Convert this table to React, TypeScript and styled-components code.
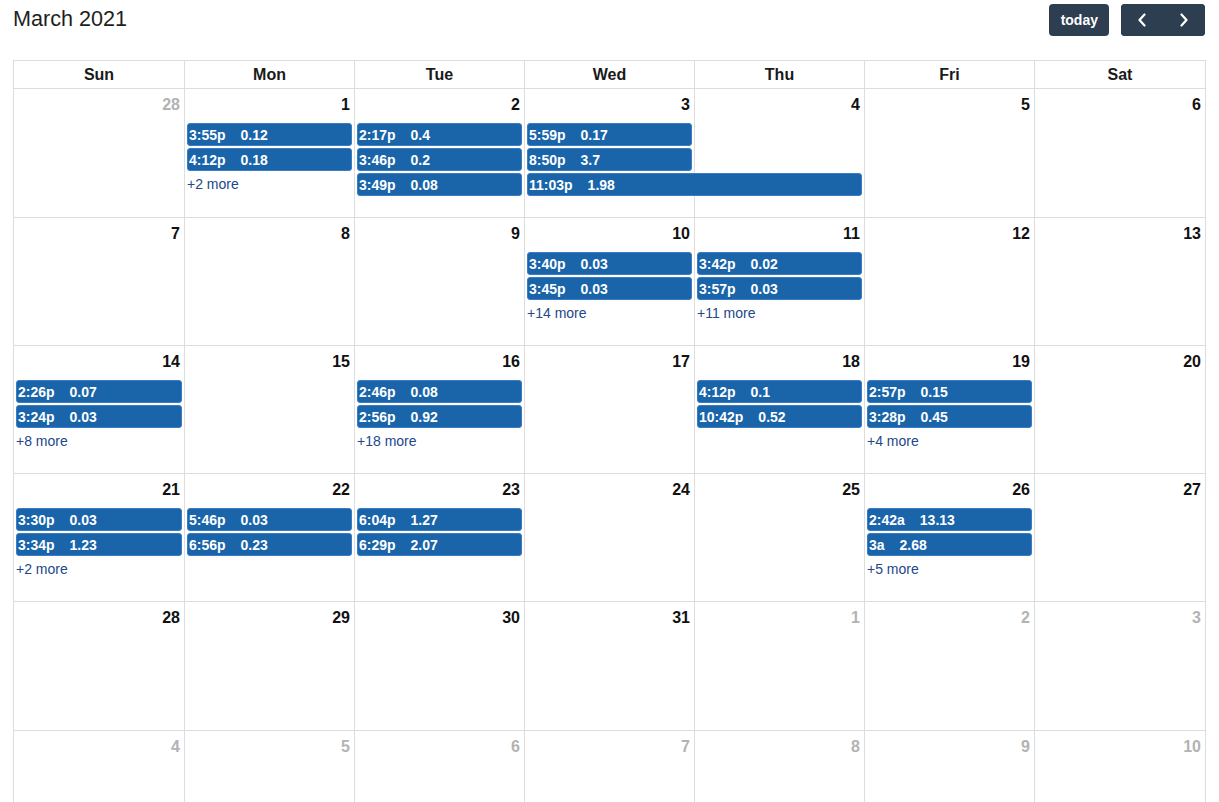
import React from "react";
import styled, { createGlobalStyle } from "styled-components";

const GlobalStyle = createGlobalStyle`
  html, body { margin: 0; padding: 0; overflow: hidden; background: #fff; }
  body { font-family: "Liberation Sans", Arial, sans-serif; color: #212121; }
  * { box-sizing: border-box; }
`;

const COLS = "171px 170px 170px 170px 170px 170px 171px";

const Page = styled.div`
  padding: 0 13px 0 13px;
`;

const Toolbar = styled.div`
  height: 40px;
  display: flex;
  align-items: center;
  justify-content: space-between;
  margin: 0 1px 20px 0;
`;

const Title = styled.h2`
  margin: 0;
  font-size: 21.6px;
  font-weight: normal;
  color: #1e1e1e;
  line-height: 1;
  position: relative;
  top: -1px;
`;

const Controls = styled.div`
  display: flex;
  align-items: center;
  gap: 12px;
`;

const Button = styled.button`
  height: 32px;
  border: none;
  background: #2c3e50;
  color: #fff;
  font-family: "Liberation Sans", Arial, sans-serif;
  font-weight: bold;
  font-size: 14px;
  border-radius: 4px;
  padding: 0 11px 0 12px;
  display: flex;
  align-items: center;
  justify-content: center;
`;

const Group = styled.div`
  display: flex;
  border-radius: 4px;
  overflow: hidden;
  background: #2c3e50;
`;

const IconButton = styled(Button)`
  width: 42px;
  padding: 0;
  border-radius: 0;
`;

const Table = styled.div`
  width: 1193px;
  border-right: 1px solid #ddd;
  border-top: 1px solid #ddd;
`;

const HeaderRow = styled.div`
  display: grid;
  grid-template-columns: ${COLS};
`;

const HeaderCell = styled.div`
  height: 28px;
  border-left: 1px solid #ddd;
  border-bottom: 1px solid #ddd;
  display: flex;
  align-items: center;
  justify-content: center;
  font-size: 16px;
  font-weight: bold;
  color: #1a1a1a;
  padding-top: 1px;
`;

const Week = styled.div<{ $h: number }>`
  display: grid;
  grid-template-columns: ${COLS};
  grid-template-rows: 34px 25px 25px 25px 1fr;
  height: ${(p) => p.$h}px;
`;

const DayCell = styled.div<{ $col: number }>`
  grid-column: ${(p) => p.$col};
  grid-row: 1 / -1;
  border-left: 1px solid #ddd;
  border-bottom: 1px solid #ddd;
  display: flex;
  justify-content: flex-end;
  align-items: flex-start;
`;

const DayNumber = styled.span<{ $other: boolean }>`
  padding: 7px 4px 0 0;
  font-size: 16px;
  font-weight: bold;
  line-height: 18px;
  color: ${(p) => (p.$other ? "#b3b3b3" : "#111")};
`;

const Event = styled.div<{ $col: number; $slot: number; $span: number }>`
  grid-column: ${(p) => p.$col} / span ${(p) => p.$span};
  grid-row: ${(p) => p.$slot + 1};
  align-self: start;
  height: 23px;
  margin: 0 2px 0 3px;
  background: #1a64a9;
  border: 1px solid #3a7cc6;
  border-radius: 3px;
  color: #fff;
  font-size: 14px;
  font-weight: bold;
  display: flex;
  align-items: center;
  padding: 0 1px;
  white-space: nowrap;
  overflow: hidden;
  min-width: 0;
`;

const EventTime = styled.span`
  margin-right: 15px;
`;

const MoreLink = styled.a<{ $col: number; $slot: number }>`
  grid-column: ${(p) => p.$col};
  grid-row: ${(p) => p.$slot + 1};
  align-self: start;
  margin-left: 3px;
  height: 23px;
  line-height: 22px;
  font-size: 14px;
  color: #22478a;
  text-decoration: none;
  white-space: nowrap;
`;

type Ev = { time: string; title: string; col: number; slot: number; span?: number };
type More = { col: number; slot: number; count: number };
type WeekData = {
  h: number;
  days: { n: number; other?: boolean }[];
  events: Ev[];
  more: More[];
};

const range = (start: number, end: number, other = false) =>
  Array.from({ length: end - start + 1 }, (_, i) => ({ n: start + i, other }));

const weeks: WeekData[] = [
  {
    h: 129,
    days: [{ n: 28, other: true }, ...range(1, 6)],
    events: [
      { time: "3:55p", title: "0.12", col: 2, slot: 1 },
      { time: "4:12p", title: "0.18", col: 2, slot: 2 },
      { time: "2:17p", title: "0.4", col: 3, slot: 1 },
      { time: "3:46p", title: "0.2", col: 3, slot: 2 },
      { time: "3:49p", title: "0.08", col: 3, slot: 3 },
      { time: "5:59p", title: "0.17", col: 4, slot: 1 },
      { time: "8:50p", title: "3.7", col: 4, slot: 2 },
      { time: "11:03p", title: "1.98", col: 4, slot: 3, span: 2 },
    ],
    more: [{ col: 2, slot: 3, count: 2 }],
  },
  {
    h: 128,
    days: range(7, 13),
    events: [
      { time: "3:40p", title: "0.03", col: 4, slot: 1 },
      { time: "3:45p", title: "0.03", col: 4, slot: 2 },
      { time: "3:42p", title: "0.02", col: 5, slot: 1 },
      { time: "3:57p", title: "0.03", col: 5, slot: 2 },
    ],
    more: [
      { col: 4, slot: 3, count: 14 },
      { col: 5, slot: 3, count: 11 },
    ],
  },
  {
    h: 128,
    days: range(14, 20),
    events: [
      { time: "2:26p", title: "0.07", col: 1, slot: 1 },
      { time: "3:24p", title: "0.03", col: 1, slot: 2 },
      { time: "2:46p", title: "0.08", col: 3, slot: 1 },
      { time: "2:56p", title: "0.92", col: 3, slot: 2 },
      { time: "4:12p", title: "0.1", col: 5, slot: 1 },
      { time: "10:42p", title: "0.52", col: 5, slot: 2 },
      { time: "2:57p", title: "0.15", col: 6, slot: 1 },
      { time: "3:28p", title: "0.45", col: 6, slot: 2 },
    ],
    more: [
      { col: 1, slot: 3, count: 8 },
      { col: 3, slot: 3, count: 18 },
      { col: 6, slot: 3, count: 4 },
    ],
  },
  {
    h: 128,
    days: range(21, 27),
    events: [
      { time: "3:30p", title: "0.03", col: 1, slot: 1 },
      { time: "3:34p", title: "1.23", col: 1, slot: 2 },
      { time: "5:46p", title: "0.03", col: 2, slot: 1 },
      { time: "6:56p", title: "0.23", col: 2, slot: 2 },
      { time: "6:04p", title: "1.27", col: 3, slot: 1 },
      { time: "6:29p", title: "2.07", col: 3, slot: 2 },
      { time: "2:42a", title: "13.13", col: 6, slot: 1 },
      { time: "3a", title: "2.68", col: 6, slot: 2 },
    ],
    more: [
      { col: 1, slot: 3, count: 2 },
      { col: 6, slot: 3, count: 5 },
    ],
  },
  {
    h: 129,
    days: [...range(28, 31), ...range(1, 3, true)],
    events: [],
    more: [],
  },
  {
    h: 129,
    days: range(4, 10, true),
    events: [],
    more: [],
  },
];

const dayNames = ["Sun", "Mon", "Tue", "Wed", "Thu", "Fri", "Sat"];

const Chevron = ({ dir }: { dir: "left" | "right" }) => (
  <svg width="10" height="14" viewBox="0 0 10 14" fill="none">
    <polyline
      points={dir === "left" ? "7.5,1.5 2.5,7 7.5,12.5" : "2.5,1.5 7.5,7 2.5,12.5"}
      stroke="#fff"
      strokeWidth="2.2"
      strokeLinecap="round"
      strokeLinejoin="round"
    />
  </svg>
);

export default function App() {
  return (
    <Page>
      <GlobalStyle />
      <Toolbar>
        <Title>March 2021</Title>
        <Controls>
          <Button>today</Button>
          <Group>
            <IconButton aria-label="prev">
              <Chevron dir="left" />
            </IconButton>
            <IconButton aria-label="next">
              <Chevron dir="right" />
            </IconButton>
          </Group>
        </Controls>
      </Toolbar>
      <Table>
        <HeaderRow>
          {dayNames.map((d) => (
            <HeaderCell key={d}>{d}</HeaderCell>
          ))}
        </HeaderRow>
        {weeks.map((w, wi) => (
          <Week key={wi} $h={w.h}>
            {w.days.map((d, di) => (
              <DayCell key={di} $col={di + 1}>
                <DayNumber $other={!!d.other}>{d.n}</DayNumber>
              </DayCell>
            ))}
            {w.events.map((e, ei) => (
              <Event key={"e" + ei} $col={e.col} $slot={e.slot} $span={e.span ?? 1}>
                <EventTime>{e.time}</EventTime>
                <span>{e.title}</span>
              </Event>
            ))}
            {w.more.map((m, mi) => (
              <MoreLink key={"m" + mi} href="#" $col={m.col} $slot={m.slot}>
                +{m.count} more
              </MoreLink>
            ))}
          </Week>
        ))}
      </Table>
    </Page>
  );
}
